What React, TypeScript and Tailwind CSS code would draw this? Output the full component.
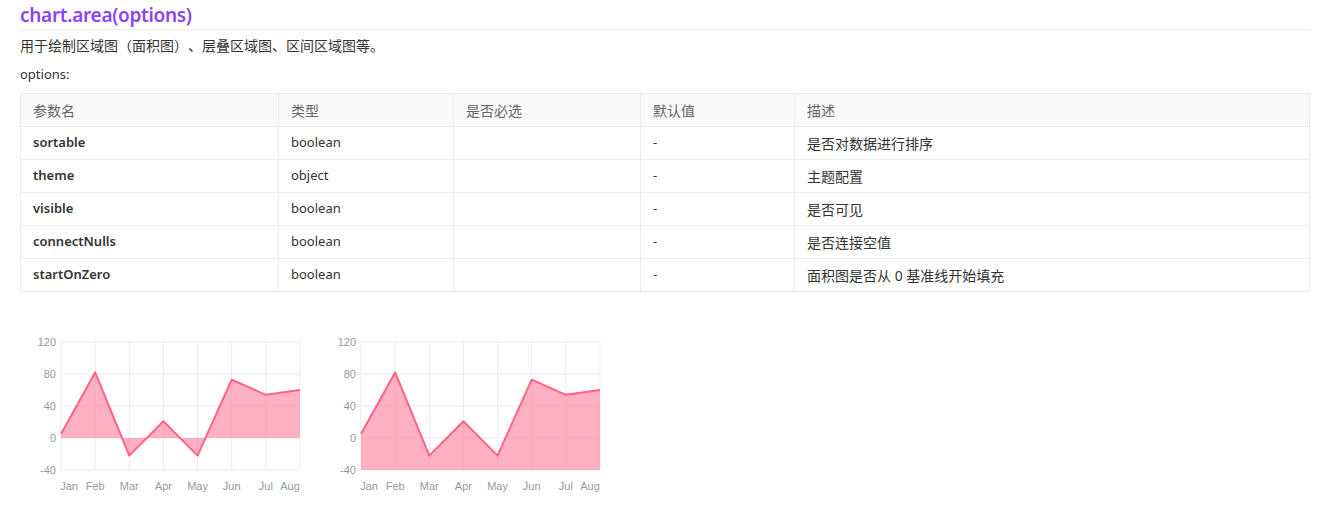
import React from "react";

const rows = [
  { name: "sortable", type: "boolean", req: "", def: "-", desc: "是否对数据进行排序" },
  { name: "theme", type: "object", req: "", def: "-", desc: "主题配置" },
  { name: "visible", type: "boolean", req: "", def: "-", desc: "是否可见" },
  { name: "connectNulls", type: "boolean", req: "", def: "-", desc: "是否连接空值" },
  { name: "startOnZero", type: "boolean", req: "", def: "-", desc: "面积图是否从 0 基准线开始填充" },
];

const data = [5, 82, -22, 21, -22, 73, 54, 60];
const months = ["Jan", "Feb", "Mar", "Apr", "May", "Jun", "Jul", "Aug"];

function AreaChart({ zeroBase }: { zeroBase: boolean }) {
  const left = 41;
  const right = 280;
  const top = 21;
  const bottom = 149;
  const step = (right - left) / 7;
  const yOf = (v: number) => bottom - ((v + 40) / 160) * (bottom - top);
  const pts = data.map((v, i) => [left + i * step, yOf(v)] as [number, number]);
  const line = pts.map((p, i) => `${i ? "L" : "M"}${p[0].toFixed(2)},${p[1].toFixed(2)}`).join(" ");
  const base = zeroBase ? yOf(0) : bottom;
  const area = `${line} L${right},${base} L${left},${base} Z`;
  const ticks = [120, 80, 40, 0, -40];
  return (
    <svg width={300} height={190} className="block">
      {ticks.map((t) => (
        <line key={t} x1={left} x2={right} y1={yOf(t)} y2={yOf(t)} stroke="#ebebeb" strokeWidth={1} />
      ))}
      {pts.map((p, i) => (
        <line key={i} x1={p[0]} x2={p[0]} y1={top} y2={bottom} stroke="#ebebeb" strokeWidth={1} />
      ))}
      <path d={area} fill="rgba(255,99,132,0.5)" />
      <path d={line} fill="none" stroke="#ff6384" strokeWidth={2} strokeLinejoin="round" />
      {ticks.map((t) => (
        <text
          key={t}
          x={left - 5}
          y={yOf(t) + 4}
          textAnchor="end"
          fontSize={11}
          fill="#999999"
          fontFamily="'Liberation Sans', Arial, sans-serif"
        >
          {t}
        </text>
      ))}
      {pts.map((p, i) => (
        <text
          key={i}
          x={i === 0 ? p[0] + 8 : i === 7 ? p[0] - 10 : p[0]}
          y={169}
          textAnchor="middle"
          fontSize={11}
          fill="#999999"
          fontFamily="'Liberation Sans', Arial, sans-serif"
        >
          {months[i]}
        </text>
      ))}
    </svg>
  );
}

const cell = "px-[12px] border border-[#ededed]";

export default function App() {
  return (
    <div
      className="w-[1325px] h-[530px] bg-white pl-[20px] pr-[15px] text-[14px] text-[#333] [text-spacing-trim:space-all]"
      style={{ fontFamily: "'Noto Sans', 'Noto Sans CJK SC', sans-serif" }}
    >
      <h1 className="text-[19px] leading-[26px] tracking-[-0.3px] pt-[2px] pb-[1px] font-semibold text-[#8b44f7] border-b border-[#eeeeee]">
        chart.area(options)
      </h1>
      <p className="mt-[6px] leading-[20px]">用于绘制区域图（面积图）、层叠区域图、区间区域图等。</p>
      <p className="mt-[8px] leading-[20px] text-[13px]">options:</p>
      <table className="mt-[9px] w-[1290px] border-collapse border border-[#ededed] table-fixed">
        <colgroup>
          <col className="w-[258px]" />
          <col className="w-[175px]" />
          <col className="w-[187px]" />
          <col className="w-[154px]" />
          <col />
        </colgroup>
        <thead>
          <tr className="bg-[#f9f9f9] h-[33px] text-[#666] text-left">
            {["参数名", "类型", "是否必选", "默认值", "描述"].map((h) => (
              <th key={h} className={`font-normal ${cell}`}>
                {h}
              </th>
            ))}
          </tr>
        </thead>
        <tbody>
          {rows.map((r) => (
            <tr key={r.name} className="h-[33px]">
              <td className={`${cell} font-semibold text-[13px]`}>{r.name}</td>
              <td className={`${cell} text-[13px]`}>{r.type}</td>
              <td className={cell}>{r.req}</td>
              <td className={`${cell} text-[13px]`}>{r.def}</td>
              <td className={cell}>{r.desc}</td>
            </tr>
          ))}
        </tbody>
      </table>
      <div className="flex mt-[29px]">
        <AreaChart zeroBase={true} />
        <AreaChart zeroBase={false} />
      </div>
    </div>
  );
}
